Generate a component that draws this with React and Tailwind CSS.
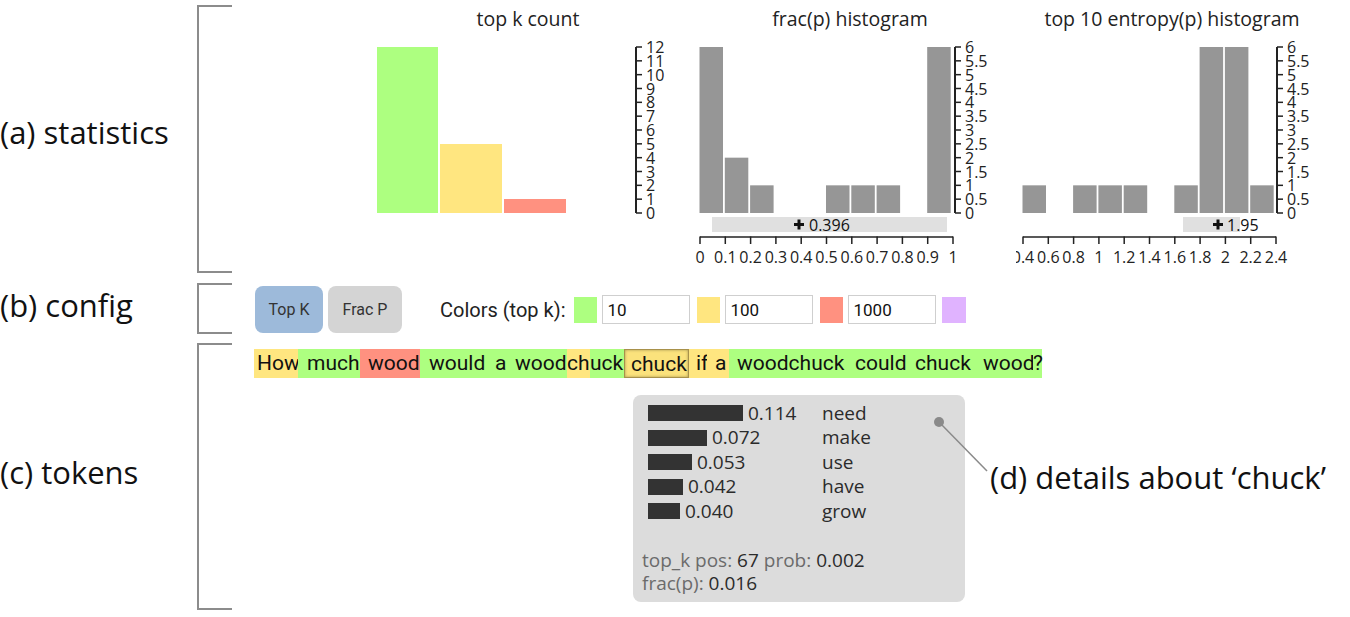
import React from "react";

const Y0 = 213;
const H = 166;
const BW = 25.3;

const frac = [6, 2, 1, 0, 0, 1, 1, 1, 0, 6];
const entropy = [1, 0, 1, 1, 1, 0, 1, 6, 6, 1];
const fracTicks = ["0", "0.1", "0.2", "0.3", "0.4", "0.5", "0.6", "0.7", "0.8", "0.9", "1"];
const entTicks = ["0.4", "0.6", "0.8", "1", "1.2", "1.4", "1.6", "1.8", "2", "2.2", "2.4"];

const GREEN = "#adff80";

// vertical axis with ticks to the right
const YAxis = ({ x, step }) => (
  <g>
    <line x1={x} y1={Y0 - H} x2={x} y2={Y0} stroke="#222" strokeWidth="2" />
    {Array.from({ length: 13 }, (_, i) => {
      const y = Y0 - (i * H) / 12;
      const v = i * step;
      return (
        <g key={i}>
          <line x1={x} y1={y} x2={x + 6} y2={y} stroke="#222" strokeWidth="1.5" />
          <text x={x + 10} y={y} dominantBaseline="central" fontSize="16" fill="#222">
            {String(v)}
          </text>
        </g>
      );
    })}
  </g>
);

const Histogram = ({ x0, values, ticks, clip }) => (
  <g>
    {values.map((v, i) =>
      v > 0 ? (
        <rect
          key={i}
          x={x0 + i * BW - 0.5}
          y={Y0 - (v * H) / 6}
          width={BW - 1.8}
          height={(v * H) / 6}
          fill="#969696"
        />
      ) : null
    )}
    <line x1={x0} y1={237} x2={x0 + 10 * BW} y2={237} stroke="#222" strokeWidth="1.5" />
    {ticks.map((t, i) => (
      <g key={t}>
        <line x1={x0 + i * BW} y1={236.5} x2={x0 + i * BW} y2={244} stroke="#222" strokeWidth="1.5" />
        <text
          x={x0 + i * BW}
          y={257}
          textAnchor="middle"
          dominantBaseline="central"
          fontSize="16"
          fill="#222"
          clipPath={clip}
        >
          {t}
        </text>
      </g>
    ))}
  </g>
);

const Plus = ({ x, y }) => (
  <path d={`M${x - 5} ${y}h10M${x} ${y - 5}v10`} stroke="#111" strokeWidth="3" />
);

const Stats = () => (
  <svg
    width="1118"
    height="278"
    viewBox="232 0 1118 278"
    className="shrink-0"
    fontFamily="'Open Sans', sans-serif"
  >
    <defs>
      <clipPath id="entclip">
        <rect x="1016" y="240" width="300" height="30" />
      </clipPath>
    </defs>

    {/* top k count */}
    <text x="528" y="18" textAnchor="middle" dominantBaseline="central" fontSize="19.5" fill="#222">
      top k count
    </text>
    <rect x="377" y="47" width="61" height="166" fill={GREEN} />
    <rect x="440" y="144" width="62" height="69" fill="#ffe680" />
    <rect x="504" y="199" width="62" height="14" fill="#ff9180" />
    <YAxis x={636} step={1} />

    {/* frac(p) histogram */}
    <text x="850" y="18" textAnchor="middle" dominantBaseline="central" fontSize="19.5" fill="#222">
      frac(p) histogram
    </text>
    <Histogram x0={700} values={frac} ticks={fracTicks} />
    <rect x="712" y="217" width="235" height="15" fill="#e0e0e0" />
    <Plus x={799} y={224.5} />
    <text x="809" y="224.5" dominantBaseline="central" fontSize="16" fill="#111">
      0.396
    </text>
    <YAxis x={955} step={0.5} />

    {/* entropy histogram */}
    <text x="1172" y="18" textAnchor="middle" dominantBaseline="central" fontSize="19.5" fill="#222">
      top 10 entropy(p) histogram
    </text>
    <Histogram x0={1023} values={entropy} ticks={entTicks} clip="url(#entclip)" />
    <rect x="1183" y="217" width="57" height="15" fill="#e0e0e0" />
    <Plus x={1218} y={224.5} />
    <text x="1227" y="224.5" dominantBaseline="central" fontSize="16" fill="#111">
      1.95
    </text>
    <YAxis x={1277} step={0.5} />
  </svg>
);

const tokens = [
  { t: "How", w: "w-[44px]", pl: "pl-[3px]", bg: "bg-[#ffe680]" },
  { t: "much", w: "w-[62px]", pl: "pl-[9px]", bg: "bg-[#adff80]" },
  { t: "wood", w: "w-[60px]", pl: "pl-[8px]", bg: "bg-[#ff9180]" },
  { t: "would", w: "w-[68px]", pl: "pl-[9px]", bg: "bg-[#adff80]" },
  { t: "a", w: "w-[20px]", pl: "pl-[7px]", bg: "bg-[#adff80]" },
  { t: "wood", w: "w-[59px]", pl: "pl-[7px]", bg: "bg-[#adff80]" },
  { t: "ch", w: "w-[23px]", pl: "pl-0", bg: "bg-[#ffe680]" },
  { t: "uck", w: "w-[34px]", pl: "pl-0", bg: "bg-[#adff80]" },
  { t: "chuck", w: "w-[65px]", pl: "pl-[6px]", bg: "bg-[#fbe27c] border border-[#a8914a] shadow-[inset_0_0_3px_rgba(0,0,0,0.35)]" },
  { t: "if", w: "w-[18px]", pl: "pl-[7px]", bg: "bg-[#ffe680]" },
  { t: "a", w: "w-[22px]", pl: "pl-[8px]", bg: "bg-[#ffe680]" },
  { t: "woodchuck", w: "w-[122px]", pl: "pl-[8px]", bg: "bg-[#adff80]" },
  { t: "could", w: "w-[59px]", pl: "pl-[4px]", bg: "bg-[#adff80]" },
  { t: "chuck", w: "w-[68px]", pl: "pl-[5px]", bg: "bg-[#adff80]" },
  { t: "wood", w: "w-[55px]", pl: "pl-[5px]", bg: "bg-[#adff80]" },
  { t: "?", w: "w-[9px]", pl: "pl-0", bg: "bg-[#adff80]" },
];

const preds = [
  { w: "w-[95px]", p: "0.114", word: "need" },
  { w: "w-[59px]", p: "0.072", word: "make" },
  { w: "w-[44px]", p: "0.053", word: "use" },
  { w: "w-[35px]", p: "0.042", word: "have" },
  { w: "w-[32px]", p: "0.040", word: "grow" },
];

export default function App() {
  return (
    <div className="relative w-[1350px] h-[617px] overflow-hidden bg-white text-[#111] font-['Open_Sans',sans-serif]">
      {/* (a) statistics */}
      <div className="flex h-[278px]">
        <div className="w-[197px] shrink-0 pt-[114px] text-[31px] leading-[36px] whitespace-nowrap">
          (a) statistics
        </div>
        <div className="mt-[5px] h-[268px] w-[35px] shrink-0 border-y-2 border-l-2 border-[#8c8c8c]" />
        <Stats />
      </div>

      {/* (b) config */}
      <div className="flex h-[60px]">
        <div className="w-[197px] shrink-0 pt-[9px] text-[31px] leading-[36px]">(b) config</div>
        <div className="mt-[5px] h-[51px] w-[35px] shrink-0 border-y-2 border-l-2 border-[#8c8c8c]" />
        <div className="flex items-center pl-[23px] pt-[8px] h-[55px] font-['Roboto',sans-serif]">
          <button className="w-[68px] h-[47px] rounded-[8px] bg-[#9dbada] text-[16px] text-[#333]">Top K</button>
          <button className="ml-[5px] w-[74px] h-[47px] rounded-[8px] bg-[#d4d4d4] text-[16px] text-[#333]">Frac P</button>
          <span className="ml-[38px] text-[20px] text-[#222]">Colors (top k):</span>
          <span className="ml-[8px] w-[23px] h-[26px] bg-[#adff80]" />
          <input
            readOnly
            value="10"
            className="ml-[5px] w-[88px] h-[29px] border border-[#cfcfcf] pl-[5px] text-[17px] text-[#111] outline-none"
          />
          <span className="ml-[7px] w-[23px] h-[26px] bg-[#ffe680]" />
          <input
            readOnly
            value="100"
            className="ml-[5px] w-[88px] h-[29px] border border-[#cfcfcf] pl-[5px] text-[17px] text-[#111] outline-none"
          />
          <span className="ml-[7px] w-[23px] h-[26px] bg-[#ff9180]" />
          <input
            readOnly
            value="1000"
            className="ml-[5px] w-[88px] h-[29px] border border-[#cfcfcf] pl-[5px] text-[17px] text-[#111] outline-none"
          />
          <span className="ml-[6px] w-[24px] h-[26px] bg-[#e0b3ff]" />
        </div>
      </div>

      {/* (c) tokens */}
      <div className="flex h-[279px]">
        <div className="w-[197px] shrink-0 pt-[116px] text-[31px] leading-[36px]">(c) tokens</div>
        <div className="mt-[5px] h-[267px] w-[35px] shrink-0 border-y-2 border-l-2 border-[#8c8c8c]" />
        <div className="pl-[22px] pt-[11px]">
          <div className="flex font-['Roboto',sans-serif] text-[21px] text-[#111]">
            {tokens.map((tk, i) => (
              <span
                key={i}
                className={`${tk.w} ${tk.pl} ${tk.bg} h-[29px] leading-[29px] whitespace-nowrap shrink-0 box-border`}
              >
                {tk.t}
              </span>
            ))}
          </div>
        </div>
      </div>

      {/* details popup */}
      <div className="absolute left-[633px] top-[395px] w-[332px] h-[207px] rounded-[8px] bg-[#dcdcdc] pl-[9px] pt-[6px] text-[19px] text-[#2b2b2b]">
        {preds.map((r) => (
          <div key={r.word} className="flex items-center h-[24.5px]">
            <div className="flex items-center w-[180px] pl-[6px]">
              <div className={`${r.w} h-[16px] bg-[#333]`} />
              <span className="ml-[5px] leading-none">{r.p}</span>
            </div>
            <span className="leading-none">{r.word}</span>
          </div>
        ))}
        <div className="mt-[25px] leading-[23px]">
          <div>
            <span className="text-[#6b6b6b]">top_k pos: </span>
            <span>67 </span>
            <span className="text-[#6b6b6b]">prob: </span>
            <span>0.002</span>
          </div>
          <div>
            <span className="text-[#6b6b6b]">frac(p): </span>
            <span>0.016</span>
          </div>
        </div>
      </div>

      {/* pointer to annotation */}
      <svg className="absolute left-[925px] top-[410px]" width="70" height="70" viewBox="925 410 70 70">
        <line x1="939" y1="422" x2="987" y2="471" stroke="#8a8a8a" strokeWidth="1.5" />
        <circle cx="939" cy="422" r="5" fill="#8a8a8a" />
      </svg>
      <div className="absolute left-[990px] top-[459px] text-[31px] leading-[36px] whitespace-nowrap">
        (d) details about ‘chuck’
      </div>
    </div>
  );
}
